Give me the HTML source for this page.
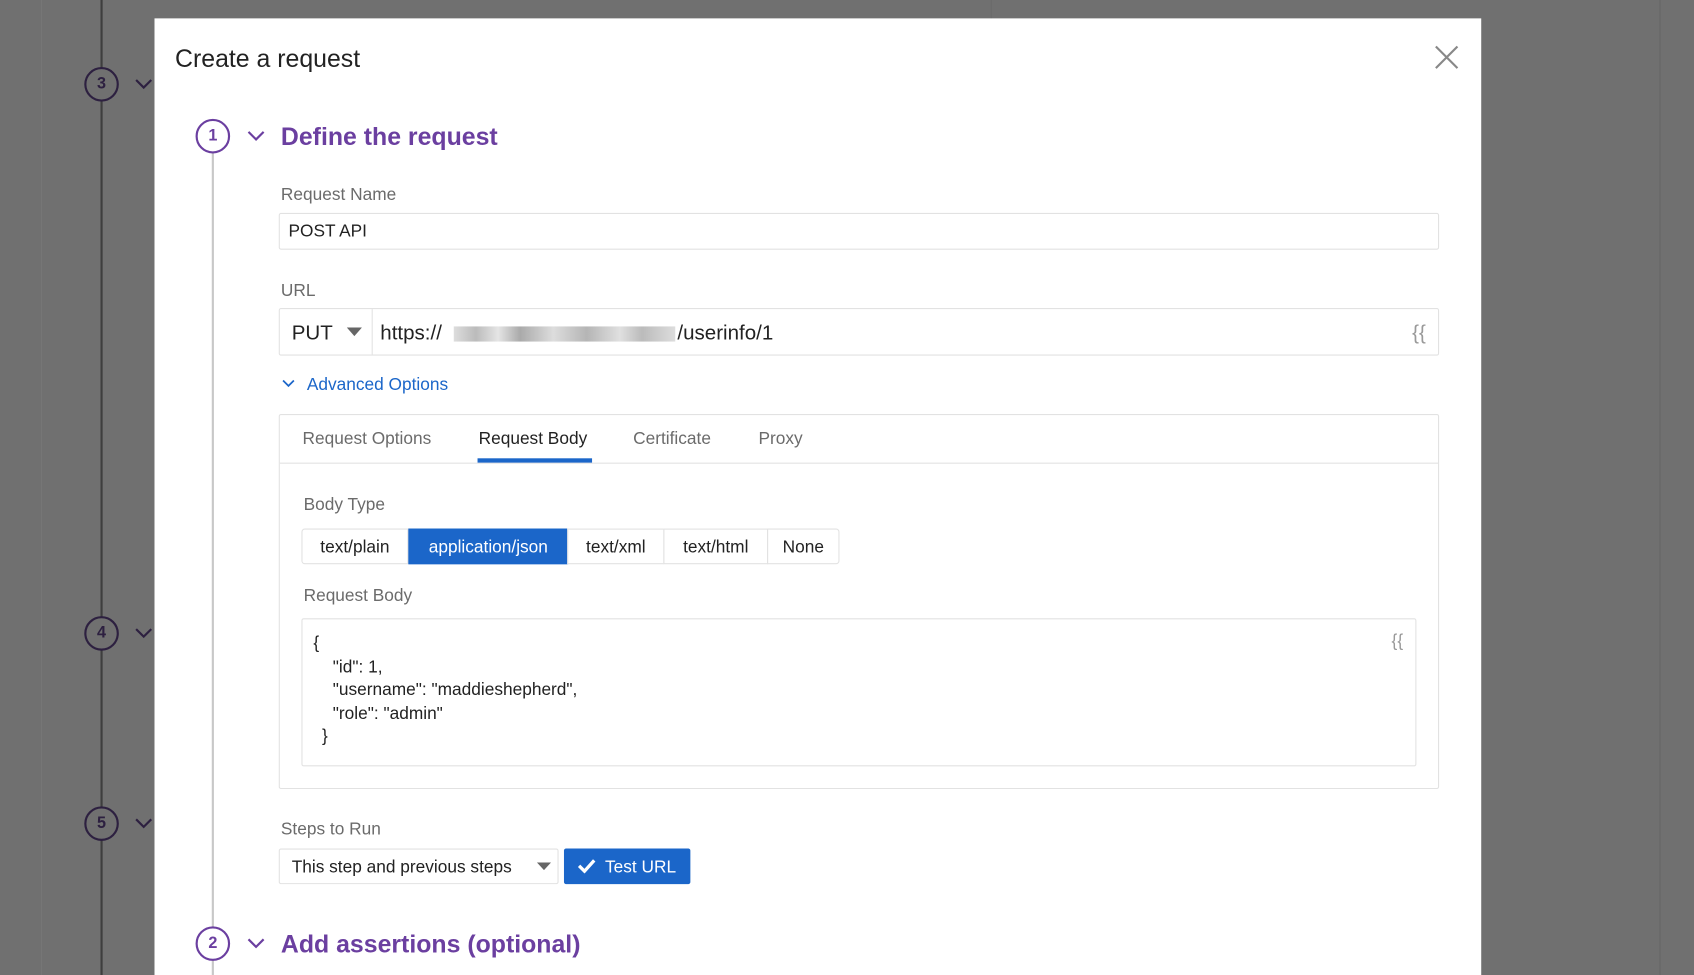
<!DOCTYPE html>
<html><head><meta charset="utf-8"><style>
*{box-sizing:border-box;margin:0;padding:0}
html,body{width:1694px;height:975px;overflow:hidden;background:#707070}
#w{position:absolute;left:0;top:0;width:1568px;height:902px;transform:scale(1.0804,1.0809);transform-origin:0 0;font-family:"Liberation Sans",sans-serif;color:#222;overflow:hidden}
.abs{position:absolute}
.t{margin-top:2px}
.bgline{position:absolute;top:0;bottom:0;width:1px;background:#666}
.circ{position:absolute;width:32px;height:32px;border-radius:50%;border:2px solid #3b2a5c;color:#3b2a5c;font-weight:bold;font-size:15px;text-align:center;line-height:28px}
.chev{position:absolute}
.modal{position:absolute;left:143px;top:17px;width:1228px;height:900px;background:#fff}
.lbl{position:absolute;font-size:16px;color:#6b6b6b;margin-top:2px}
.inp{position:absolute;border:1px solid #e2e2e2;border-radius:2px;background:#fff}
.pc{position:absolute;width:32px;height:32px;border-radius:50%;border:2px solid #6b3fa0;color:#6b3fa0;font-size:15px;font-weight:bold;text-align:center;line-height:28px;background:#fff}
.h{position:absolute;font-size:23px;font-weight:bold;color:#6b3fa0;margin-top:2px}
.tab{position:absolute;top:398px;font-size:16px;color:#6b6b6b}
.seg{position:absolute;top:489px;height:33px;border:1px solid #e2e2e2;font-size:16px;line-height:33px;text-align:center;color:#222;background:#fff}
.code{font-size:16px;line-height:21.5px;position:absolute;margin-top:2px}
</style></head><body><div id="w">
<div class="bgline" style="left:38px;background:#777"></div>
<div class="bgline" style="left:93px;width:2px;background:#3e3e3e"></div>
<div class="bgline" style="left:917px;background:#6a6a6a"></div>
<div class="bgline" style="left:1536px;background:#666"></div>
<div class="circ" style="left:78px;top:62px;background:#707070;color:#2d2040;border-color:#2d2040">3</div>
<div class="circ" style="left:78px;top:570px;background:#707070;color:#2d2040;border-color:#2d2040">4</div>
<div class="circ" style="left:78px;top:746px;background:#707070;color:#2d2040;border-color:#2d2040">5</div>
<svg class="chev" style="left:124px;top:72px" width="18" height="12"><path d="M2 2l7 7 7-7" stroke="#2d2040" stroke-width="2" fill="none"/></svg>
<svg class="chev" style="left:124px;top:580px" width="18" height="12"><path d="M2 2l7 7 7-7" stroke="#2d2040" stroke-width="2" fill="none"/></svg>
<svg class="chev" style="left:124px;top:756px" width="18" height="12"><path d="M2 2l7 7 7-7" stroke="#2d2040" stroke-width="2" fill="none"/></svg>

<div class="modal"></div>
<div class="abs" style="left:162px;top:41px;font-size:23px;color:#222">Create a request</div>
<svg class="abs" style="left:1328px;top:42px" width="22" height="22"><path d="M1 1l20 20M21 1L1 21" stroke="#888" stroke-width="2"/></svg>

<div class="abs" style="left:196px;top:140px;width:2px;height:762px;background:#c8c8c8"></div>
<div class="pc" style="left:181px;top:110px">1</div>
<svg class="abs" style="left:228px;top:120px" width="18" height="12"><path d="M2 2l7 7 7-7" stroke="#6b3fa0" stroke-width="2" fill="none"/></svg>
<div class="h" style="left:260px;top:111px">Define the request</div>

<div class="lbl" style="left:260px;top:170px">Request Name</div>
<div class="inp" style="left:258px;top:197px;width:1074px;height:34px"></div>
<div class="abs" style="left:267px;top:206px;font-size:16px">POST API</div>

<div class="lbl" style="left:260px;top:259px">URL</div>
<div class="inp" style="left:258px;top:285px;width:1074px;height:44px"></div>
<div class="abs" style="left:344px;top:286px;width:1px;height:42px;background:#e2e2e2"></div>
<div class="abs" style="left:270px;top:298px;font-size:19px">PUT</div>
<svg class="abs" style="left:321px;top:303px" width="14" height="9"><path d="M0 0h14L7 8z" fill="#666"/></svg>
<div class="abs" style="left:352px;top:298px;font-size:19px">https://</div>
<div class="abs" style="left:420px;top:302px;width:205px;height:14px;background:linear-gradient(90deg,#ddd,#bbb 10%,#e5e5e5 20%,#aaa 30%,#ddd 45%,#b5b5b5 60%,#e0e0e0 75%,#bbb 85%,#ddd)"></div>
<div class="abs" style="left:627px;top:298px;font-size:19px">/userinfo/1</div>
<div class="abs" style="left:1307px;top:298px;font-size:19px;color:#999">{{</div>

<svg class="abs" style="left:261px;top:350px" width="13" height="10"><path d="M1 2l5 5 5-5" stroke="#1b66c9" stroke-width="1.6" fill="none"/></svg>
<div class="abs" style="left:284px;top:348px;font-size:16px;color:#1b66c9">Advanced Options</div>

<div class="inp" style="left:258px;top:383px;width:1074px;height:347px"></div>
<div class="abs" style="left:259px;top:428px;width:1072px;height:1px;background:#e2e2e2"></div>
<div class="tab" style="left:280px">Request Options</div>
<div class="tab" style="left:443px;color:#222">Request Body</div>
<div class="abs" style="left:442px;top:424px;width:106px;height:4px;background:#1b66c9"></div>
<div class="tab" style="left:586px">Certificate</div>
<div class="tab" style="left:702px">Proxy</div>

<div class="lbl" style="left:281px;top:457px">Body Type</div>
<div class="seg" style="left:279px;width:99px;border-radius:3px 0 0 3px">text/plain</div>
<div class="seg" style="left:378px;width:148px;background:#1b66c9;border-color:#1b66c9;color:#fff">application/json</div>
<div class="seg" style="left:525px;width:90px">text/xml</div>
<div class="seg" style="left:614px;width:97px">text/html</div>
<div class="seg" style="left:710px;width:67px;border-radius:0 3px 3px 0">None</div>

<div class="lbl" style="left:281px;top:541px">Request Body</div>
<div class="inp" style="left:279px;top:572px;width:1032px;height:137px"></div>
<div class="code" style="left:290px;top:583px">{</div>
<div class="code" style="left:308px;top:605px">"id": 1,</div>
<div class="code" style="left:308px;top:626px">"username": "maddieshepherd",</div>
<div class="code" style="left:308px;top:648px">"role": "admin"</div>
<div class="code" style="left:298px;top:669px">}</div>
<div class="abs" style="left:1288px;top:585px;font-size:16px;color:#999">{{</div>

<div class="lbl" style="left:260px;top:757px">Steps to Run</div>
<div class="inp" style="left:258px;top:785px;width:259px;height:33px"></div>
<div class="abs" style="left:270px;top:794px;font-size:16px">This step and previous steps</div>
<svg class="abs" style="left:497px;top:798px" width="13" height="8"><path d="M0 0h13L6.5 7z" fill="#666"/></svg>
<div class="abs" style="left:522px;top:785px;width:117px;height:33px;background:#1b66c9;border-radius:2px"></div>
<svg class="abs" style="left:534px;top:794px" width="18" height="14"><path d="M2 7l5 5 9-10" stroke="#fff" stroke-width="3" fill="none"/></svg>
<div class="abs" style="left:560px;top:794px;font-size:16px;color:#fff">Test URL</div>

<div class="pc" style="left:181px;top:857px">2</div>
<svg class="abs" style="left:228px;top:867px" width="18" height="12"><path d="M2 2l7 7 7-7" stroke="#6b3fa0" stroke-width="2" fill="none"/></svg>
<div class="h" style="left:260px;top:858px">Add assertions (optional)</div>
</div></body></html>
